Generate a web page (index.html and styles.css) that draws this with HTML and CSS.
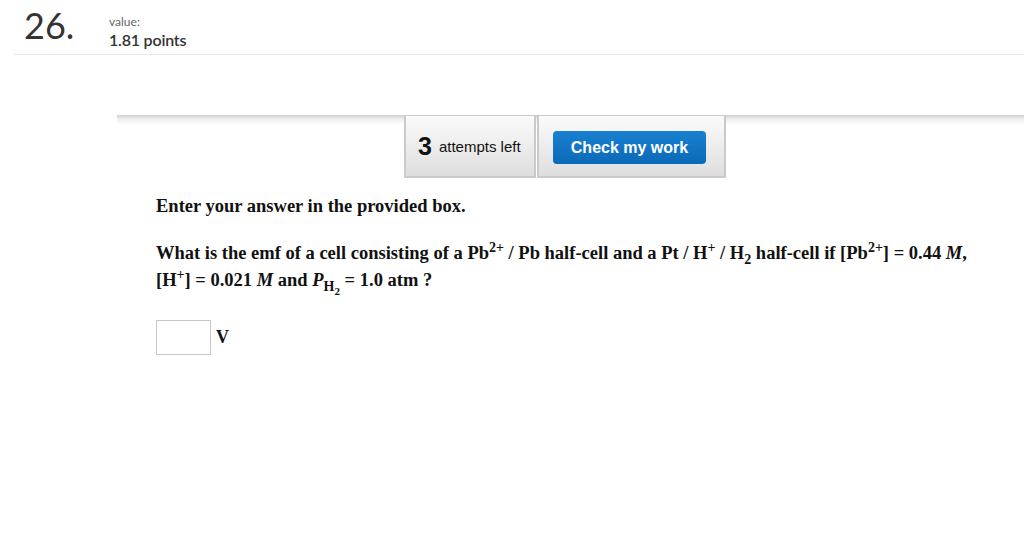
FILE: index.html
```html
<!DOCTYPE html>
<html>
<head>
<meta charset="utf-8">
<link rel="stylesheet" href="styles.css">
</head>
<body>
<div class="header">
  <div class="qnum">26.</div>
  <div class="value">
    <div class="value-label">value:</div>
    <div class="value-points">1.81 points</div>
  </div>
</div>
<div class="toolbar">
  <div class="attempts"><span class="attempts-num">3</span> attempts left</div>
  <div class="check"><button class="check-btn">Check my work</button></div>
</div>
<div class="question">
  <p class="instr">Enter your answer in the provided box.</p>
  <p class="text">What is the emf of a cell consisting of a Pb<sup>2+</sup> / Pb half-cell and a Pt / H<sup>+</sup> / H<sub>2</sub> half-cell if [Pb<sup>2+</sup>] = 0.44 <i>M</i>,<br>[H<sup>+</sup>] = 0.021 <i>M</i> and <i>P</i><sub>H<sub>2</sub></sub> = 1.0 atm ?</p>
  <div class="answer"><span class="answer-box"></span><span class="unit">V</span></div>
</div>
</body>
</html>
```

FILE: styles.css
```css
body {
  margin: 0;
  background: #fff;
  font-family: "Lato", "Open Sans", sans-serif;
}
.header {
  margin-left: 14px;
  height: 55px;
  border-bottom: 1px solid #e6e6e6;
  display: flex;
  align-items: flex-start;
  box-sizing: border-box;
}
.qnum {
  margin-left: 10px;
  margin-top: 5px;
  font-size: 36px;
  line-height: 40px;
  color: #333;
  width: 85px;
}
.value { margin-top: 15px; }
.value-label {
  font-size: 12px;
  line-height: 14px;
  color: #666;
}
.value-points {
  font-size: 16px;
  line-height: 22px;
  font-weight: 600;
  color: #333;
  letter-spacing: -0.2px;
}
.toolbar {
  margin-top: 60px;
  margin-left: 117px;
  height: 64px;
  background: linear-gradient(#cfcfcf 0px, #efefef 4px, #fff 10px);
  display: flex;
  padding-left: 287px;
  font-family: "Liberation Sans", Arial, sans-serif;
}
.attempts {
  width: 116px;
  height: 60px;
  border: 2px solid #cacaca;
  border-top-width: 1px;
  background: linear-gradient(#fbfbfb, #dedede);
  display: flex;
  align-items: center;
  justify-content: flex-start;
  padding-left: 12px;
  font-size: 15px;
  color: #111;
  gap: 7px;
  box-sizing: content-box;
}
.attempts-num {
  font-size: 25px;
  font-weight: bold;
  line-height: 1;
}
.check {
  margin-left: 1px;
  width: 171px;
  height: 45px;
  border: 2px solid #cacaca;
  border-top-width: 1px;
  background: linear-gradient(#fbfbfb, #dedede);
  display: flex;
  align-items: flex-start;
  padding-left: 14px;
  padding-top: 15px;
  box-sizing: content-box;
}
.check-btn {
  width: 153px;
  height: 33px;
  border: none;
  border-radius: 4px;
  background: linear-gradient(#1a7fd0, #0a6ab8);
  color: #fff;
  font-family: "Liberation Sans", Arial, sans-serif;
  font-weight: bold;
  font-size: 16px;
  padding: 0;
}
.question {
  padding-left: 156px;
  font-family: "Liberation Serif", "Times New Roman", serif;
  font-weight: bold;
  font-size: 18.5px;
  color: #111;
}
.instr {
  margin: 16px 0 0;
  line-height: 22px;
}
.text {
  margin: 23px 0 0;
  line-height: 27px;
}
.text sup, .text sub {
  font-size: 14px;
  line-height: 0;
}
.text sub sub { font-size: 11px; }
.answer {
  margin-top: 26px;
  display: flex;
  align-items: center;
  gap: 5px;
}
.answer-box {
  width: 53px;
  height: 33px;
  border: 1px solid #c8c8c8;
  background: #fff;
}
.unit { font-size: 18px; }
```
